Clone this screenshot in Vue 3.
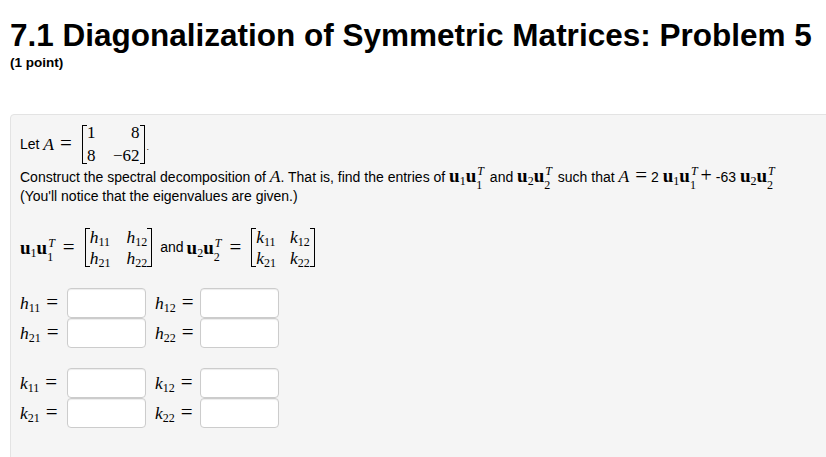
<script setup>
const groups = [
  [['h', '11', '12'], ['h', '21', '22']],
  [['k', '11', '12'], ['k', '21', '22']],
]
</script>

<template>
  <div class="page">
    <h1 class="title">7.1 Diagonalization of Symmetric Matrices: Problem 5</h1>
    <div class="points">(1 point)</div>
    <section class="well">
      <div class="line-matrix">
        <span>Let&nbsp;</span>
        <span class="m"><i>A</i><span class="eq">=</span></span>
        <span class="matrix a-matrix">
          <span class="c-l">1</span><span class="c-r">8</span>
          <span class="c-l">8</span><span class="c-r">−62</span>
        </span>
        <span class="dot">.</span>
      </div>
      <div class="text-line">
        Construct the spectral decomposition of <span class="m"><i>A</i></span>. That is, find the entries of
        <span class="m"><b>u</b><sub>1</sub><b>u</b><span class="ss"><i>T</i><em>1</em></span></span> and
        <span class="m"><b>u</b><sub>2</sub><b>u</b><span class="ss"><i>T</i><em>2</em></span></span> such that
        <span class="m"><i>A</i><span class="eq">=</span></span>2
        <span class="m"><b>u</b><sub>1</sub><b>u</b><span class="ss"><i>T</i><em>1</em></span><span class="plus">+</span></span> -63
        <span class="m"><b>u</b><sub>2</sub><b>u</b><span class="ss"><i>T</i><em>2</em></span></span>
      </div>
      <div class="text-line second">(You'll notice that the eigenvalues are given.)</div>

      <div class="line-def">
        <span class="m"><b>u</b><sub>1</sub><b>u</b><span class="ss"><i>T</i><em>1</em></span><span class="eq">=</span></span>
        <span class="matrix var-matrix">
          <span class="m"><i>h</i><sub>11</sub></span><span class="m"><i>h</i><sub>12</sub></span>
          <span class="m"><i>h</i><sub>21</sub></span><span class="m"><i>h</i><sub>22</sub></span>
        </span>
        <span class="and">and</span>
        <span class="m"><b>u</b><sub>2</sub><b>u</b><span class="ss"><i>T</i><em>2</em></span><span class="eq">=</span></span>
        <span class="matrix var-matrix k-matrix">
          <span class="m"><i>k</i><sub>11</sub></span><span class="m"><i>k</i><sub>12</sub></span>
          <span class="m"><i>k</i><sub>21</sub></span><span class="m"><i>k</i><sub>22</sub></span>
        </span>
      </div>

      <div v-for="(group, g) in groups" :key="g" class="answers">
        <template v-for="row in group" :key="row[1]">
          <span class="m label"><i>{{ row[0] }}</i><sub>{{ row[1] }}</sub><span class="eq">=</span></span>
          <input class="box" type="text" />
          <span class="m label second-col"><i>{{ row[0] }}</i><sub>{{ row[2] }}</sub><span class="eq">=</span></span>
          <input class="box" type="text" />
        </template>
      </div>
    </section>
  </div>
</template>

<style>
html, body { margin: 0; background: #fff; }
</style>

<style scoped>
.page {
  width: 826px;
  height: 457px;
  overflow: hidden;
  box-sizing: border-box;
  padding: 17px 0 0 10px;
  font-family: "Liberation Sans", Arial, sans-serif;
  font-size: 14px;
  line-height: 20px;
  color: #000;
}
.title {
  margin: 0;
  font-size: 31.5px;
  line-height: 36px;
  font-weight: 700;
  white-space: nowrap;
}
.points {
  margin-top: 1px;
  font-size: 13.5px;
  line-height: 18px;
  font-weight: 700;
}
.well {
  box-sizing: border-box;
  width: 830px;
  height: 360px;
  margin-top: 42px;
  padding: 9px 9px;
  background: #f5f5f5;
  border: 1px solid #e3e3e3;
  border-radius: 4px;
  white-space: nowrap;
}
.m {
  font-family: "Liberation Serif", "DejaVu Serif", serif;
  font-size: 17.5px;
}
.m i { font-style: italic; }
.m b { font-weight: 700; font-size: 19px; line-height: 0; }
.m sub {
  font-size: 12px;
  line-height: 0;
  vertical-align: -3px;
}
.eq { margin: 0 4px 0 6px; font-size: 21px; line-height: 0; }
.plus { margin-left: 1px; font-size: 20px; line-height: 0; }
.ss {
  display: inline-flex;
  flex-direction: column;
  vertical-align: 7px;
  height: 0;
  line-height: 12px;
  font-size: 12px;
  margin-right: 2px;
}
.ss i { height: 12px; margin-left: 1px; }
.ss em { font-style: normal; height: 12px; margin-top: 2px; }
.line-matrix,
.line-def {
  display: flex;
  align-items: center;
}
.line-matrix { height: 40px; }
.matrix {
  display: inline-grid;
  align-items: center;
  position: relative;
  font-family: "Liberation Serif", "DejaVu Serif", serif;
  font-size: 17px;
  line-height: 16px;
  margin-left: 6px;
  padding: 0 5px;
}
.matrix::before,
.matrix::after {
  content: "";
  position: absolute;
  top: 0;
  bottom: 0;
  width: 4px;
  border: 1px solid #000;
}
.matrix::before { left: 0; border-right: 0; }
.matrix::after { right: 0; border-left: 0; }
.a-matrix {
  grid-template-columns: 10px auto;
  grid-template-rows: 16px 16px;
  gap: 7px 16px;
}
.c-l { text-align: left; }
.c-r { text-align: right; }
.dot { font-size: 9px; margin: 6px 0 0 2px; }
.text-line {
  height: 21px;
  line-height: 21px;
  margin-top: 1px;
}
.second { margin-top: 0; }
.line-def { height: 40px; margin-top: 20px; }
.var-matrix {
  grid-template-columns: auto auto;
  grid-template-rows: 18px 18px;
  gap: 3px 16px;
}
.k-matrix { column-gap: 14px; }
.and { margin: 0 3px 0 8px; }
.answers {
  display: grid;
  grid-template-columns: 47px 79px 54px 79px;
  grid-auto-rows: 30px;
  align-items: center;
  margin-top: 20px;
}
.line-def + .answers { margin-top: 21px; }
.label { white-space: nowrap; }
.second-col { padding-left: 9px; }
.box {
  box-sizing: border-box;
  width: 79px;
  height: 30px;
  margin: 0;
  padding: 4px 6px;
  background: #fff;
  border: 1px solid #ccc;
  border-radius: 4px;
  box-shadow: inset 0 1px 1px rgba(0, 0, 0, 0.075);
  outline: none;
}
</style>
